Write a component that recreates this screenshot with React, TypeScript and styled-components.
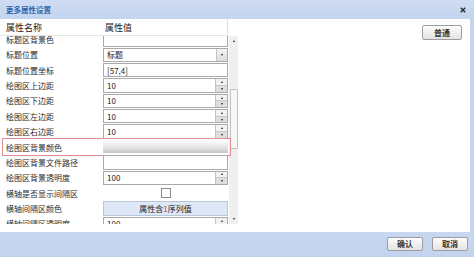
import React from "react";
import styled, { createGlobalStyle, css } from "styled-components";

const GlobalStyle = createGlobalStyle`
  html, body {
    margin: 0;
    padding: 0;
    background: #c6d6f0;
  }
  body {
    font-family: "Noto Sans CJK SC", "Noto Sans", sans-serif;
    color: #333;
  }
`;

const ROW_H = 15.4;

const Dialog = styled.div`
  width: 474px;
  height: 257px;
  display: flex;
  flex-direction: column;
  background: #c6d6f0;
  overflow: hidden;
`;

const TitleBar = styled.div`
  height: 19px;
  flex-shrink: 0;
  display: flex;
  align-items: center;
  justify-content: space-between;
  padding: 0 6px;
  background: linear-gradient(#cfdcf3, #c3d4ef);
`;

const Title = styled.span`
  font-size: 7.5px;
  font-weight: bold;
  color: #2f62aa;
  line-height: 1;
`;

const CloseIcon = styled.svg`
  width: 6px;
  height: 6px;
  margin-right: 2px;
`;

const Body = styled.div`
  height: 213px;
  flex-shrink: 0;
  display: flex;
  background: #fff;
  margin-right: 4px;
`;

const GridArea = styled.div`
  width: 239px;
  display: flex;
  flex-direction: column;
`;

const HeaderRow = styled.div`
  height: 17px;
  flex-shrink: 0;
  display: flex;
  width: 228px;
  border-bottom: 1px solid #e6e6e6;
  border-right: 1px solid #e0e0e0;
  box-sizing: border-box;
`;

const HeaderCell = styled.div<{ $w?: number }>`
  ${(p) => (p.$w ? `width: ${p.$w}px;` : "flex: 1;")}
  display: flex;
  align-items: center;
  padding-left: ${(p) => (p.$w ? 6 : 2)}px;
  font-size: 9px;
  color: #222;
  box-sizing: border-box;
`;

const ScrollArea = styled.div`
  height: 188px;
  display: flex;
  overflow: hidden;
`;

const Rows = styled.div`
  width: 228px;
  margin-top: -4.4px;
  display: flex;
  flex-direction: column;
`;

const Row = styled.div<{ $selected?: boolean }>`
  height: ${ROW_H}px;
  flex-shrink: 0;
  display: flex;
  position: relative;
  ${(p) =>
    p.$selected &&
    css`
      &::after {
        content: "";
        position: absolute;
        left: 2px;
        right: -3px;
        top: -1.5px;
        bottom: -1.5px;
        border: 1px solid #e38d93;
        pointer-events: none;
      }
    `}
`;

const Label = styled.div`
  width: 103px;
  flex-shrink: 0;
  display: flex;
  align-items: center;
  padding-left: 6px;
  box-sizing: border-box;
  font-size: 8px;
  color: #2b2b2b;
  white-space: nowrap;
  overflow: hidden;
`;

const ValueCell = styled.div`
  flex: 1;
  display: flex;
  align-items: stretch;
  padding: 0.5px 0;
  min-width: 0;
`;

const Box = styled.div`
  flex: 1;
  display: flex;
  border: 1px solid #a9a9a9;
  background: #fff;
  min-width: 0;
`;

const BoxText = styled.span`
  flex: 1;
  display: flex;
  align-items: center;
  padding-left: 3px;
  font-size: 8px;
  color: #222;
`;

const DropButton = styled.div`
  width: 10px;
  display: flex;
  align-items: center;
  justify-content: center;
  background: linear-gradient(#f6f6f6, #dcdcdc);
  border-left: 1px solid #c4c4c4;
`;

const SpinColumn = styled.div`
  width: 11px;
  display: flex;
  flex-direction: column;
  border-left: 1px solid #c4c4c4;
`;

const SpinHalf = styled.div<{ $down?: boolean }>`
  flex: 1;
  display: flex;
  align-items: center;
  justify-content: center;
  background: ${(p) => (p.$down ? "#dedede" : "#f2f2f2")};
  border-top: ${(p) => (p.$down ? "1px solid #c8c8c8" : "none")};
`;

const Arrow = styled.span<{ $down?: boolean }>`
  width: 0;
  height: 0;
  border-left: 1.5px solid transparent;
  border-right: 1.5px solid transparent;
  ${(p) =>
    p.$down
      ? "border-top: 2px solid #222;"
      : "border-bottom: 2px solid #222;"}
`;

const ColorSwatch = styled.div`
  flex: 1;
  margin: 1px 0;
  background: linear-gradient(#fbfbfb, #e6e6e6 50%, #c6c6c6);
`;

const CheckCell = styled.div`
  flex: 1;
  display: flex;
  align-items: center;
  justify-content: center;
`;

const CheckBox = styled.span`
  width: 8px;
  height: 8px;
  border: 1px solid #8c8c8c;
  background: #fff;
`;

const SeriesButton = styled.div`
  flex: 1;
  display: flex;
  align-items: center;
  justify-content: center;
  background: #dde7f5;
  border: 1px solid #b9c6da;
  font-size: 8px;
  color: #222;
`;

const Red = styled.span`
  color: #d43c3c;
`;

const ScrollBar = styled.div`
  width: 9px;
  margin-left: 1px;
  display: flex;
  flex-direction: column;
  background: #efefef;
`;

const ScrollArrow = styled.div`
  height: 10px;
  display: flex;
  align-items: center;
  justify-content: center;
`;

const ScrollTrack = styled.div`
  flex: 1;
  display: flex;
  flex-direction: column;
  padding-top: 43px;
`;

const Thumb = styled.div`
  height: 58px;
  margin: 0 0.5px;
  border: 1px solid #c2c2c2;
  border-radius: 1px;
  background: #f7f7f7;
`;

const SidePanel = styled.div`
  flex: 1;
  display: flex;
  justify-content: flex-end;
  align-items: flex-start;
  padding: 6px 8px 0 0;
`;

const Button = styled.button<{ $w: number; $h: number }>`
  width: ${(p) => p.$w}px;
  height: ${(p) => p.$h}px;
  padding: 0;
  border: 1px solid #9d9d9d;
  border-radius: 2px;
  background: linear-gradient(#fdfdfd, #e3e3e3);
  font-family: inherit;
  font-size: 8px;
  font-weight: bold;
  color: #333;
  display: flex;
  align-items: center;
  justify-content: center;
  line-height: 1;
`;

const Footer = styled.div`
  flex: 1;
  display: flex;
  justify-content: flex-end;
  align-items: flex-start;
  gap: 9px;
  padding: 5px 6px 0 0;
  background: linear-gradient(#c8d7f0, #c3d3ef);
`;

type Kind = "text" | "select" | "spin" | "color" | "check" | "series";

interface Prop {
  label: string;
  kind: Kind;
  value?: string;
  selected?: boolean;
}

// the list is scrolled a little, so the first and last rows are cut off
const props: Prop[] = [
  { label: "标题区背景色", kind: "text" },
  { label: "标题位置", kind: "select", value: "标题" },
  { label: "标题位置坐标", kind: "text", value: "[57,4]" },
  { label: "绘图区上边距", kind: "spin", value: "10" },
  { label: "绘图区下边距", kind: "spin", value: "10" },
  { label: "绘图区左边距", kind: "spin", value: "10" },
  { label: "绘图区右边距", kind: "spin", value: "10" },
  { label: "绘图区背景颜色", kind: "color", selected: true },
  { label: "绘图区背景文件路径", kind: "text" },
  { label: "绘图区背景透明度", kind: "spin", value: "100" },
  { label: "横轴是否显示间隔区", kind: "check" },
  { label: "横轴间隔区颜色", kind: "series" },
  { label: "横轴间隔区透明度", kind: "spin", value: "100" },
];

const Editor = ({ p }: { p: Prop }) => {
  switch (p.kind) {
    case "select":
      return (
        <Box>
          <BoxText>{p.value}</BoxText>
          <DropButton>
            <Arrow $down />
          </DropButton>
        </Box>
      );
    case "spin":
      return (
        <Box>
          <BoxText>{p.value}</BoxText>
          <SpinColumn>
            <SpinHalf>
              <Arrow />
            </SpinHalf>
            <SpinHalf $down>
              <Arrow $down />
            </SpinHalf>
          </SpinColumn>
        </Box>
      );
    case "color":
      return <ColorSwatch />;
    case "check":
      return (
        <CheckCell>
          <CheckBox />
        </CheckCell>
      );
    case "series":
      return (
        <SeriesButton>
          属性含<Red>1</Red>序列值
        </SeriesButton>
      );
    default:
      return (
        <Box>
          <BoxText>{p.value}</BoxText>
        </Box>
      );
  }
};

export default function App() {
  return (
    <>
      <GlobalStyle />
      <Dialog>
        <TitleBar>
          <Title>更多属性设置</Title>
          <CloseIcon viewBox="0 0 6 6">
            <path d="M0.8 0.8 L5.2 5.2 M5.2 0.8 L0.8 5.2" stroke="#2a2a2a" strokeWidth="1.4" />
          </CloseIcon>
        </TitleBar>
        <Body>
          <GridArea>
            <HeaderRow>
              <HeaderCell $w={103}>属性名称</HeaderCell>
              <HeaderCell>属性值</HeaderCell>
            </HeaderRow>
            <ScrollArea>
              <Rows>
                {props.map((p) => (
                  <Row key={p.label} $selected={p.selected}>
                    <Label>{p.label}</Label>
                    <ValueCell>
                      <Editor p={p} />
                    </ValueCell>
                  </Row>
                ))}
              </Rows>
              <ScrollBar>
                <ScrollArrow>
                  <Arrow />
                </ScrollArrow>
                <ScrollTrack>
                  <Thumb />
                </ScrollTrack>
                <ScrollArrow>
                  <Arrow $down />
                </ScrollArrow>
              </ScrollBar>
            </ScrollArea>
          </GridArea>
          <SidePanel>
            <Button $w={40} $h={15}>普通</Button>
          </SidePanel>
        </Body>
        <Footer>
          <Button $w={36} $h={14}>确认</Button>
          <Button $w={36} $h={14}>取消</Button>
        </Footer>
      </Dialog>
    </>
  );
}
